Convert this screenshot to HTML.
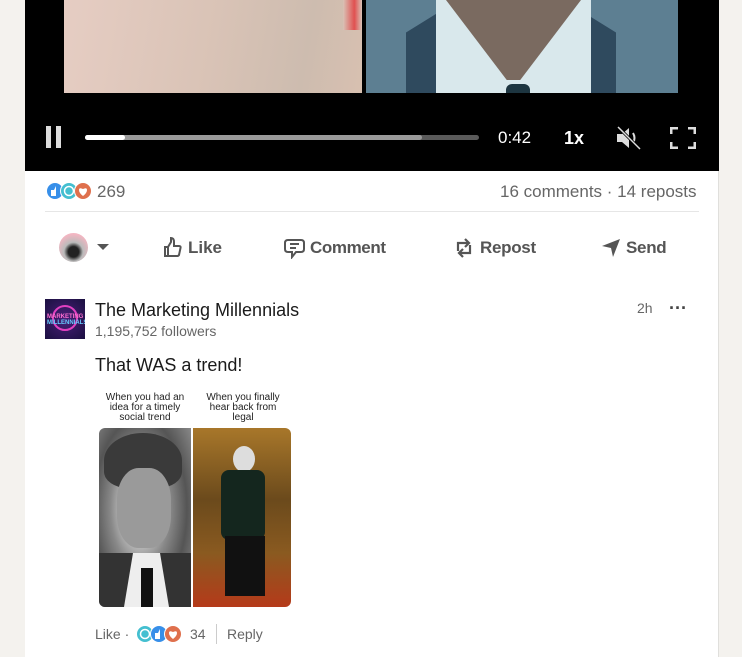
<!DOCTYPE html>
<html><head><meta charset="utf-8"><style>
*{margin:0;padding:0;box-sizing:border-box}
body{width:742px;height:657px;background:#f4f2ee;position:relative;overflow:hidden;font-family:"Liberation Sans",sans-serif}
.card{position:absolute;left:25px;top:0;width:694px;height:657px;background:#fff;border-right:1px solid #e0dfdc}
.video{position:absolute;left:25px;top:0;width:694px;height:171px;background:#000}
.abs{position:absolute}
.g{color:#666}
.act{font-size:17px;color:#555;font-weight:bold;top:238px}
</style></head><body>
<div class="card"></div>
<div class="video">
 <div class="abs" style="left:39px;top:0;width:298px;height:93px;background:linear-gradient(100deg,#e6cdc3,#d9c3b6 50%,#cdbcaf 80%,#d8c0b0);"></div>
 <div class="abs" style="left:318px;top:0;width:19px;height:30px;background:linear-gradient(90deg,#d9c3b6,#e05050 60%,#d9c3b6)"></div>
 <div class="abs" style="left:341px;top:0;width:312px;height:93px;background:#5d7f92;overflow:hidden">
  <div class="abs" style="left:40px;top:0;width:210px;height:93px;background:#2f4a5e;clip-path:polygon(0 35%,25% 0,75% 0,100% 35%,100% 100%,0 100%)"></div>
  <div class="abs" style="left:70px;top:0;width:155px;height:93px;background:#d9e8ec"></div>
  <div class="abs" style="left:80px;top:0;width:135px;height:80px;background:#7a6a60;clip-path:polygon(0 0,100% 0,55% 100%,45% 100%)"></div>
  <div class="abs" style="left:140px;top:84px;width:24px;height:9px;background:#1d3540;border-radius:6px 6px 0 0"></div>
 </div>
 <div class="abs" style="left:21px;top:126px;width:5px;height:22px;background:#ddd"></div>
 <div class="abs" style="left:31px;top:126px;width:5px;height:22px;background:#ddd"></div>
 <div class="abs" style="left:60px;top:135px;width:394px;height:5px;background:#5a5a5a;border-radius:3px"></div>
 <div class="abs" style="left:60px;top:135px;width:337px;height:5px;background:#9a9a9a;border-radius:3px"></div>
 <div class="abs" style="left:60px;top:135px;width:40px;height:5px;background:#fff;border-radius:3px"></div>
 <div class="abs" style="left:473px;top:128px;color:#fff;font-size:17px">0:42</div>
 <div class="abs" style="left:539px;top:128px;color:#fff;font-size:18px;font-weight:bold">1x</div>
 <svg class="abs" style="left:590px;top:125px" width="28" height="26" viewBox="0 0 28 26"><path d="M2 9h5l7-6v20l-7-6H2z" fill="#ddd"/><path d="M18 8q3 5 0 10" stroke="#ddd" stroke-width="2" fill="none"/><path d="M3 2l22 22" stroke="#000" stroke-width="3"/><path d="M3 2l22 22" stroke="#ddd" stroke-width="1.5"/></svg>
 <svg class="abs" style="left:645px;top:127px" width="26" height="22" viewBox="0 0 26 22" fill="none" stroke="#ddd" stroke-width="3"><path d="M1 7V1h7M18 1h7v6M25 15v6h-7M8 21H1v-6"/></svg>
</div>
<svg class="abs" style="left:46px;top:181px" width="50" height="20"><circle cx="9" cy="10" r="8.5" fill="#378fe9" stroke="#fff"/><circle cx="23" cy="10" r="8.5" fill="#44bfd0" stroke="#fff"/><circle cx="37" cy="10" r="8.5" fill="#df704d" stroke="#fff"/><path d="M33 9q0-3 4-1q4-2 4 1q0 3-4 6q-4-3-4-6z" fill="#fff"/><path d="M5 9h3l2-4v10H5z" fill="#fff"/><circle cx="23" cy="10" r="4.5" fill="none" stroke="#fff" stroke-width="1.5"/></svg>
<div class="abs g" style="left:97px;top:182px;font-size:17px">269</div>
<div class="abs g" style="left:500px;top:182px;font-size:17px">16 comments · 14 reposts</div>
<div class="abs" style="left:45px;top:211px;width:654px;height:1px;background:#e6e6e6"></div>
<div class="abs" style="left:59px;top:233px;width:29px;height:29px;border-radius:50%;background:radial-gradient(circle at 50% 65%,#222 0 22%,#bbb 40%,#f3b6c2 75%);overflow:hidden"></div>
<div class="abs" style="left:97px;top:244px;border-left:6px solid transparent;border-right:6px solid transparent;border-top:6px solid #555"></div>
<svg class="abs" style="left:162px;top:236px" width="20" height="22" viewBox="0 0 20 22" fill="none" stroke="#555" stroke-width="2"><path d="M3 11h3v9H3zM6 11l3-5V2q3 0 3 4v4h5q2 0 1.5 2l-1.5 7q-.5 1-2 1H6"/></svg>
<div class="abs act" style="left:188px">Like</div>
<svg class="abs" style="left:284px;top:238px" width="21" height="21" viewBox="0 0 21 21" fill="none" stroke="#555" stroke-width="2"><path d="M4 2h13q3 0 3 3v6q0 3-3 3h-5l-4 5v-5H4q-3 0-3-3V5q0-3 3-3z"/><path d="M6 6h9M6 10h6"/></svg>
<div class="abs act" style="left:310px;letter-spacing:-.4px">Comment</div>
<svg class="abs" style="left:455px;top:237px" width="18" height="22" viewBox="0 0 18 22" fill="none" stroke="#555" stroke-width="2.2"><path d="M3 14V6h10M10 2l4 4-4 4M15 8v8H5M8 20l-4-4 4-4"/></svg>
<div class="abs act" style="left:480px;letter-spacing:-.3px">Repost</div>
<svg class="abs" style="left:601px;top:238px" width="20" height="20" viewBox="0 0 20 20"><path d="M1 8L19 1 12 19 10 10z" fill="#555"/></svg>
<div class="abs act" style="left:626px;letter-spacing:-.3px">Send</div>
<div class="abs" style="left:45px;top:299px;width:40px;height:40px;background:radial-gradient(circle,#4a1f7a,#1a1040);overflow:hidden">
 <div class="abs" style="left:7px;top:6px;width:26px;height:26px;border:2px solid #e040c0;border-radius:50%"></div>
 <div class="abs" style="left:2px;top:15px;width:36px;font-size:6px;color:#ff6fd0;text-align:center;line-height:6px;font-weight:bold">MARKETING<br><span style="color:#6cf">MILLENNIALS</span></div>
</div>
<div class="abs" style="left:95px;top:300px;font-size:18px;color:#1a1a1a">The Marketing Millennials</div>
<div class="abs g" style="left:95px;top:323px;font-size:14px">1,195,752 followers</div>
<div class="abs g" style="left:637px;top:300px;font-size:14px">2h</div>
<div class="abs" style="left:669px;top:298px;font-size:18px;color:#444;font-weight:bold;letter-spacing:0px">···</div>
<div class="abs" style="left:95px;top:355px;font-size:18px;color:#1a1a1a">That WAS a trend!</div>
<div class="abs" style="left:98px;top:393px;width:94px;text-align:center;font-size:10px;line-height:10px;color:#222">When you had an idea for a timely social trend</div>
<div class="abs" style="left:198px;top:393px;width:90px;text-align:center;font-size:10px;line-height:10px;color:#222">When you finally hear back from legal</div>
<div class="abs" style="left:99px;top:428px;width:92px;height:179px;border-radius:6px 0 0 6px;background:radial-gradient(ellipse at 45% 45%,#c8c8c8 0 22%,#888 42%,#555 65%,#999);overflow:hidden">
 <div class="abs" style="left:5px;top:5px;width:78px;height:55px;background:#3a3a3a;border-radius:50% 50% 30% 30%"></div>
 <div class="abs" style="left:18px;top:40px;width:54px;height:80px;background:#9a9a9a;border-radius:40%"></div>
 <div class="abs" style="left:0;top:125px;width:92px;height:54px;background:#333"></div>
 <div class="abs" style="left:25px;top:125px;width:45px;height:54px;background:#eee;clip-path:polygon(20% 0,80% 0,100% 100%,0 100%)"></div>
 <div class="abs" style="left:42px;top:140px;width:12px;height:39px;background:#111"></div>
</div>
<div class="abs" style="left:193px;top:428px;width:98px;height:179px;border-radius:0 6px 6px 0;background:linear-gradient(#a8772a,#6b4a1c 40%,#8a5a20 70%,#b53a1a);overflow:hidden">
 <div class="abs" style="left:40px;top:18px;width:22px;height:26px;background:#ddd;border-radius:50%"></div>
 <div class="abs" style="left:28px;top:42px;width:44px;height:70px;background:#14261e;border-radius:8px"></div>
 <div class="abs" style="left:32px;top:108px;width:40px;height:60px;background:#111"></div>
</div>
<div class="abs g" style="left:95px;top:626px;font-size:14px">Like ·</div>
<svg class="abs" style="left:136px;top:624px" width="50" height="20"><circle cx="9" cy="10" r="8.5" fill="#44bfd0" stroke="#fff"/><circle cx="23" cy="10" r="8.5" fill="#378fe9" stroke="#fff"/><circle cx="37" cy="10" r="8.5" fill="#df704d" stroke="#fff"/><path d="M33 9q0-3 4-1q4-2 4 1q0 3-4 6q-4-3-4-6z" fill="#fff"/><path d="M19 9h3l2-4v10h-5z" fill="#fff"/><circle cx="9" cy="10" r="4.5" fill="none" stroke="#fff" stroke-width="1.5"/></svg>
<div class="abs g" style="left:190px;top:626px;font-size:14px">34</div>
<div class="abs" style="left:216px;top:624px;width:1px;height:20px;background:#ccc"></div>
<div class="abs g" style="left:227px;top:626px;font-size:14px">Reply</div>
</body></html>
